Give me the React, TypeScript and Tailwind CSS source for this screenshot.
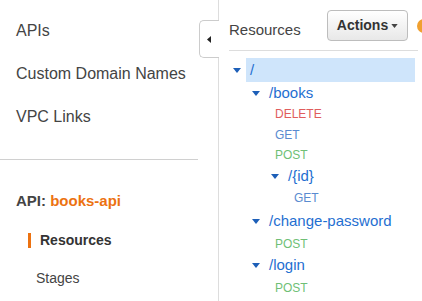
import React from 'react';

type Row = {
  kind: 'res' | 'method';
  label: string;
  indent: string;
  height: string;
  selected?: boolean;
};

const methodColor: Record<string, string> = {
  DELETE: 'text-[#e05d5d]',
  GET: 'text-[#5a8bd0]',
  POST: 'text-[#6fbf76]',
};

const rows: Row[] = [
  { kind: 'res', label: '/', indent: 'pl-[4px]', height: 'h-[24px]', selected: true },
  { kind: 'res', label: '/books', indent: 'pl-[23px]', height: 'h-[22px]' },
  { kind: 'method', label: 'DELETE', indent: 'pl-[46px]', height: 'h-[20px]' },
  { kind: 'method', label: 'GET', indent: 'pl-[46px]', height: 'h-[21px]' },
  { kind: 'method', label: 'POST', indent: 'pl-[46px]', height: 'h-[20px]' },
  { kind: 'res', label: '/{id}', indent: 'pl-[42px]', height: 'h-[22px]' },
  { kind: 'method', label: 'GET', indent: 'pl-[65px]', height: 'h-[22px]' },
  { kind: 'res', label: '/change-password', indent: 'pl-[23px]', height: 'h-[24px]' },
  { kind: 'method', label: 'POST', indent: 'pl-[46px]', height: 'h-[21px]' },
  { kind: 'res', label: '/login', indent: 'pl-[23px]', height: 'h-[23px]' },
  { kind: 'method', label: 'POST', indent: 'pl-[46px]', height: 'h-[22px]' },
];

const Caret = ({ className }: { className: string }) => (
  <svg className={className} viewBox="0 0 8 5" width={8} height={5}>
    <path d="M0 0h8L4 5z" fill="currentColor" />
  </svg>
);

const App: React.FC = () => {
  return (
    <div className="w-[422px] h-[301px] flex overflow-hidden bg-white font-['Liberation_Sans',Arial,sans-serif] text-[#444]">
      {/* Left nav */}
      <aside className="relative w-[219px] shrink-0 border-r border-[#ddd] pt-[22px]">
        <div className="pl-[16px] text-[16px] leading-[18px]">APIs</div>
        <div className="pl-[16px] mt-[25px] text-[16px] leading-[18px]">Custom Domain Names</div>
        <div className="pl-[16px] mt-[25px] text-[16px] leading-[18px]">VPC Links</div>
        <div className="mt-[33px] w-[198px] h-px bg-[#d0d0d0]" />
        <div className="pl-[16px] mt-[32px] text-[15px] leading-[17px] font-bold text-[#444]">
          API: <span className="text-[#ec7211]">books-api</span>
        </div>
        <div className="ml-[28px] mt-[24px] border-l-[3px] border-[#ec7211] pl-[9px] text-[14px] leading-[15px] font-bold text-[#333]">
          Resources
        </div>
        <div className="pl-[36px] mt-[22px] text-[14px] leading-[16px] text-[#444]">Stages</div>

        {/* collapse tab */}
        <div className="absolute left-[199px] top-[20px] w-[20px] h-[38px] bg-white border border-r-0 border-[#ccc] rounded-l-[5px] flex items-center justify-center">
          <svg width={4} height={7} viewBox="0 0 4 7" className="ml-[-1px]">
            <path d="M4 0v7L0 3.5z" fill="#222" />
          </svg>
        </div>
      </aside>

      {/* Resources panel */}
      <main className="flex-1 pl-[10px] pr-[4px]">
        <div className="relative flex items-start h-[51px] pt-[10px] border-b border-[#ddd]">
          <div className="mt-[11px] text-[15px] leading-[17px] text-[#444]">Resources</div>
          <button className="ml-auto mr-[10px] w-[81px] h-[31px] rounded-[4px] border border-[#bdbdbd] bg-gradient-to-b from-white to-[#e8e8e8] flex items-center justify-center gap-[3px] text-[14px] font-bold text-[#333]">
            Actions
            <Caret className="text-[#444] w-[7px] h-[4px]" />
          </button>
          <div className="absolute left-[188px] top-[19px] w-[14px] h-[14px] rounded-full bg-[#f0a030]" />
        </div>

        <div className="mt-[7px] pr-[3px]">
          {rows.map((r, i) =>
            r.kind === 'res' ? (
              <div key={i} className={`flex items-center ${r.height} ${r.indent}`}>
                <Caret className="shrink-0 text-[#1d5fb8] w-[8px] h-[5px]" />
                <div
                  className={`ml-[5px] flex-1 h-full flex items-center pl-[4px] text-[15px] text-[#1f6fd1] ${
                    r.selected ? 'bg-[#cfe5fb]' : ''
                  }`}
                >
                  {r.label}
                </div>
              </div>
            ) : (
              <div key={i} className={`flex items-center ${r.height} ${r.indent} text-[12px] ${methodColor[r.label]}`}>
                {r.label}
              </div>
            )
          )}
        </div>
      </main>
    </div>
  );
};

export default App;
